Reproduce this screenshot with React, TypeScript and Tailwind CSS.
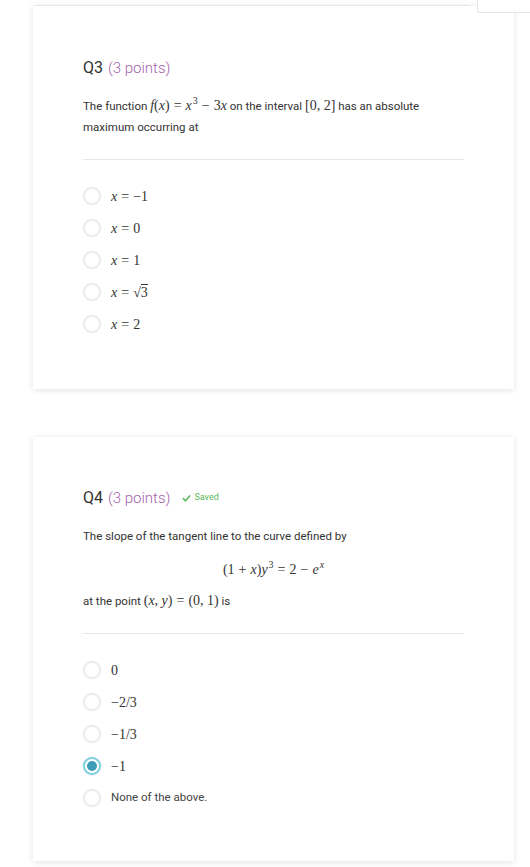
import React from "react";

const sans = { fontFamily: "Roboto, 'Liberation Sans', sans-serif" };

function M({ children }: { children: React.ReactNode }) {
  return (
    <span className="text-[14px] text-[#333]" style={{ fontFamily: "'Liberation Serif', serif" }}>
      {children}
    </span>
  );
}

function I({ children }: { children: React.ReactNode }) {
  return <i className="italic">{children}</i>;
}

// relation / binary operator with KaTeX-like spacing
function Op({ children }: { children: React.ReactNode }) {
  return <span className="mx-[4px]">{children}</span>;
}

function Sup({ children }: { children: React.ReactNode }) {
  return <span className="relative -top-[6px] ml-[1px] text-[10px] leading-none">{children}</span>;
}

function Radio({ checked }: { checked?: boolean }) {
  if (checked) {
    return (
      <span className="flex h-[18px] w-[18px] items-center justify-center rounded-full border-2 border-[#7fd0e2] bg-white shadow-[0_0_2px_rgba(0,0,0,0.15)]">
        <span className="h-[10px] w-[10px] rounded-full bg-[#3d9cb8]" />
      </span>
    );
  }
  return (
    <span className="h-[18px] w-[18px] rounded-full border-2 border-[#ececec] bg-white shadow-[0_0_2px_rgba(0,0,0,0.08)]" />
  );
}

function Option({ label, checked }: { label: React.ReactNode; checked?: boolean }) {
  return (
    <div className="flex h-[32px] items-center">
      <Radio checked={checked} />
      <span className="ml-[10px] flex items-center">{label}</span>
    </div>
  );
}

function Heading({ n, saved }: { n: string; saved?: boolean }) {
  return (
    <div className="flex h-[24px] items-center">
      <span className="text-[16px] text-[#333]">{n}</span>
      <span className="ml-[5px] text-[15px] font-light text-[#a463ad]">(3 points)</span>
      {saved && (
        <span className="ml-[12px] flex items-center gap-[3px] text-[9px] text-[#5cb85c]">
          <svg width="9" height="8" viewBox="0 0 10 8">
            <path d="M1 4.2 L3.8 7 L9 1.2" fill="none" stroke="#5cb85c" strokeWidth="1.8" />
          </svg>
          Saved
        </span>
      )}
    </div>
  );
}

export default function App() {
  return (
    <div className="relative min-h-screen bg-white" style={sans}>
      <div className="absolute right-0 top-0 h-[13px] w-[53px] rounded-bl-[3px] border-b border-l border-[#e6e6e6] bg-white" />
      <div className="ml-[33px] h-[6px] w-[437px] border-b border-[#f0f0f0]" />

      <div className="ml-[33px] w-[481px] bg-white px-[50px] pt-[50px] pb-[49px] shadow-[0_1px_6px_rgba(0,0,0,0.12)]">
        <Heading n="Q3" />
        <p className="mt-[15px] text-[11.5px] leading-[21px] text-[#333]">
          The function{" "}
          <M>
            <I>f</I>(<I>x</I>)<Op>=</Op>
            <I>x</I>
            <Sup>3</Sup>
            <Op>−</Op>3<I>x</I>
          </M>{" "}
          on the interval <M>[0, 2]</M> has an absolute maximum occurring at
        </p>
        <div className="mt-[21px] border-t border-[#e8e8e8]" />
        <div className="mt-[20px]">
          <Option label={<M><I>x</I><Op>=</Op>−1</M>} />
          <Option label={<M><I>x</I><Op>=</Op>0</M>} />
          <Option label={<M><I>x</I><Op>=</Op>1</M>} />
          <Option
            label={
              <M>
                <I>x</I>
                <Op>=</Op>√<span className="border-t border-[#333]">3</span>
              </M>
            }
          />
          <Option label={<M><I>x</I><Op>=</Op>2</M>} />
        </div>
      </div>

      <div className="ml-[33px] mt-[48px] w-[481px] bg-white px-[50px] pt-[49px] pb-[47px] shadow-[0_1px_6px_rgba(0,0,0,0.12)]">
        <Heading n="Q4" saved />
        <p className="mt-[16px] text-[11.5px] leading-[21px] text-[#333]">
          The slope of the tangent line to the curve defined by
        </p>
        <p className="mt-[11px] text-center leading-[21px]">
          <M>
            (1<Op>+</Op>
            <I>x</I>)<I>y</I>
            <Sup>3</Sup>
            <Op>=</Op>2<Op>−</Op>
            <I>e</I>
            <Sup>
              <I>x</I>
            </Sup>
          </M>
        </p>
        <p className="mt-[10px] text-[11.5px] leading-[21px] text-[#333]">
          at the point{" "}
          <M>
            (<I>x</I>, <I>y</I>)<Op>=</Op>(0, 1)
          </M>{" "}
          is
        </p>
        <div className="mt-[21px] border-t border-[#e8e8e8]" />
        <div className="mt-[20px]">
          <Option label={<M>0</M>} />
          <Option label={<M>−2/3</M>} />
          <Option label={<M>−1/3</M>} />
          <Option label={<M>−1</M>} checked />
          <Option label={<span className="text-[11.5px] text-[#444]">None of the above.</span>} />
        </div>
      </div>
    </div>
  );
}
